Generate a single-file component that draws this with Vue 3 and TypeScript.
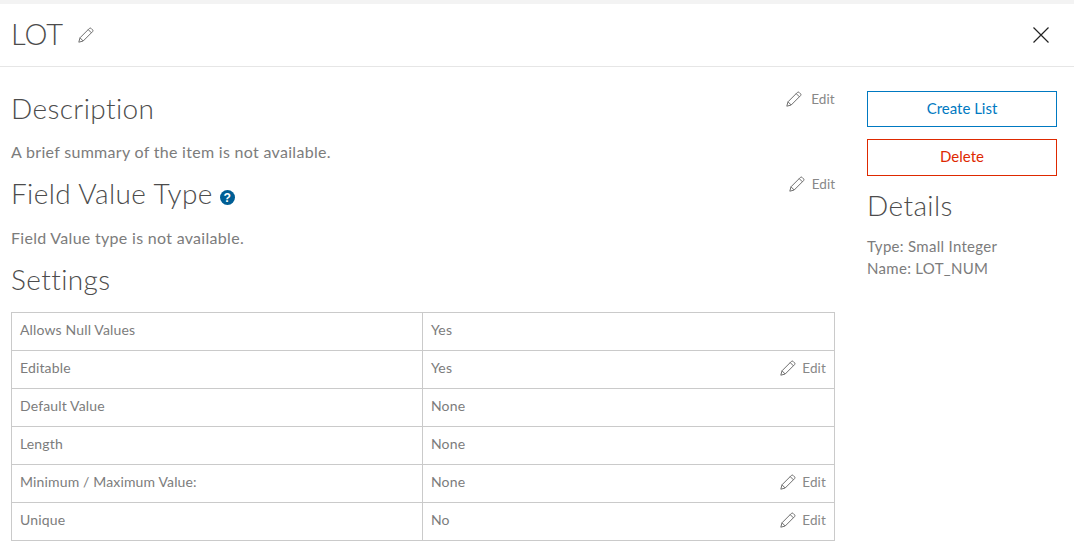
<script setup lang="ts">
interface Row { label: string; value: string; editable: boolean }
const rows: Row[] = [
  { label: 'Allows Null Values', value: 'Yes', editable: false },
  { label: 'Editable', value: 'Yes', editable: true },
  { label: 'Default Value', value: 'None', editable: false },
  { label: 'Length', value: 'None', editable: false },
  { label: 'Minimum / Maximum Value:', value: 'None', editable: true },
  { label: 'Unique', value: 'No', editable: true },
]
const pencil = 'M0.8 15.2 L2 10.8 L11.4 1.4 Q12.2 0.6 13.1 1.4 L14.6 2.9 Q15.4 3.8 14.6 4.6 L5.2 14 Z M2 10.8 L5.2 14 M10.2 2.6 L13.4 5.8'
</script>

<template>
  <div class="page">
    <header class="head">
      <div class="title">
        <h1>LOT</h1>
        <svg class="pen pen-title" viewBox="0 0 16 16"><path :d="pencil" /></svg>
      </div>
      <svg class="close" viewBox="0 0 16 16"><path d="M0.5 0.5 L15.5 15.5 M15.5 0.5 L0.5 15.5" /></svg>
    </header>
    <div class="body">
      <main class="main">
        <section class="sec sec-desc">
          <div class="sec-head">
            <h2>Description</h2>
            <a class="edit edit-wide"><svg class="pen" viewBox="0 0 16 16"><path :d="pencil" /></svg>Edit</a>
          </div>
          <p>A brief summary of the item is not available.</p>
        </section>
        <section class="sec sec-type">
          <div class="sec-head">
            <h2 class="with-help">Field Value Type<svg class="help" viewBox="0 0 16 16">
                <circle cx="8" cy="8" r="8" />
                <text x="8" y="12.5" text-anchor="middle">?</text>
              </svg></h2>
            <a class="edit"><svg class="pen" viewBox="0 0 16 16"><path :d="pencil" /></svg>Edit</a>
          </div>
          <p>Field Value type is not available.</p>
        </section>
        <section class="sec sec-set">
          <h2>Settings</h2>
          <table>
            <tbody>
              <tr v-for="r in rows" :key="r.label">
                <td class="c1">{{ r.label }}</td>
                <td class="c2">
                  <div class="cell">
                    <span>{{ r.value }}</span>
                    <a v-if="r.editable" class="edit"><svg class="pen" viewBox="0 0 16 16"><path :d="pencil" /></svg>Edit</a>
                  </div>
                </td>
              </tr>
            </tbody>
          </table>
        </section>
      </main>
      <aside class="side">
        <button class="btn blue">Create List</button>
        <button class="btn red">Delete</button>
        <h2>Details</h2>
        <div class="meta">
          <div>Type: Small Integer</div>
          <div>Name: LOT_NUM</div>
        </div>
      </aside>
    </div>
  </div>
</template>

<style scoped>
.page {
  width: 1074px;
  height: 559px;
  overflow: hidden;
  background: #fff;
  border-top: 4px solid #f3f3f3;
  box-sizing: border-box;
  font-family: Lato, "Open Sans", sans-serif;
  color: #7c7c7c;
  font-size: 16px;
}
.head {
  height: 62px;
  border-bottom: 1px solid #e6e6e6;
  display: flex;
  align-items: center;
  justify-content: space-between;
  padding: 0 25px 0 11px;
}
.title { display: flex; align-items: center; gap: 15px; }
h1 { margin: 0 0 4px; font-size: 29px; font-weight: 300; color: #4c4c4c; line-height: 1; }
h2 { margin: 0; font-size: 28px; font-weight: 300; color: #4c4c4c; line-height: 32px; letter-spacing: 0.4px; }
.pen-title { width: 16px; height: 16px; margin-bottom: 1px; }
.close { width: 16px; height: 16px; fill: none; stroke: #222; stroke-width: 1.2; }
.pen { fill: none; stroke: #6e6e6e; stroke-width: 1; flex: none; }
.edit .pen { width: 16px; height: 16px; }
.body { display: flex; padding: 0 17px 0 11px; gap: 32px; }
.main { width: 824px; }
.sec-head { display: flex; justify-content: space-between; align-items: flex-start; }
.sec p { letter-spacing: 0.3px; line-height: 20px; }
.sec-desc { padding-top: 25px; }
.sec-desc p { margin: 18px 0 0; }
.sec-type { padding-top: 15px; }
.sec-type p { margin: 19px 0 0; }
.sec-set { padding-top: 15px; }
.help { width: 15px; height: 15px; vertical-align: -1px; margin-left: 7px; }
.help circle { fill: #005e95; }
.help text { fill: #fff; font-size: 13px; font-weight: 900; font-family: "Liberation Sans", sans-serif; }
.edit { display: inline-flex; align-items: center; gap: 6px; font-size: 13.5px; color: #888; line-height: 16px; }
.sec .sec-head .edit { margin-top: -1px; gap: 7px; }
.sec .sec-head .edit-wide { gap: 9px; margin-top: -1px; margin-right: 0.5px; }
table { margin-top: 17px; width: 824px; border-collapse: collapse; table-layout: fixed; }
td { border: 1px solid #cacaca; height: 38px; padding: 0 8px 4px; box-sizing: border-box; font-size: 14px; letter-spacing: 0.15px; }
.c1 { width: 411px; }
.cell { display: flex; justify-content: space-between; align-items: center; }
.side { width: 190px; display: flex; flex-direction: column; padding-top: 24px; }
.btn {
  height: 36px;
  background: #fff;
  font: inherit;
  font-size: 15px;
  border: 1px solid;
  padding: 0 0 3px;
  margin-bottom: 12px;
}
.blue { color: #0079c1; border-color: #0079c1; }
.red { color: #de2900; border-color: #de2900; height: 37px; }
.side h2 { margin-top: 1px; }
.meta { margin-top: 14px; line-height: 22px; font-size: 15px; letter-spacing: 0.3px; }
</style>
